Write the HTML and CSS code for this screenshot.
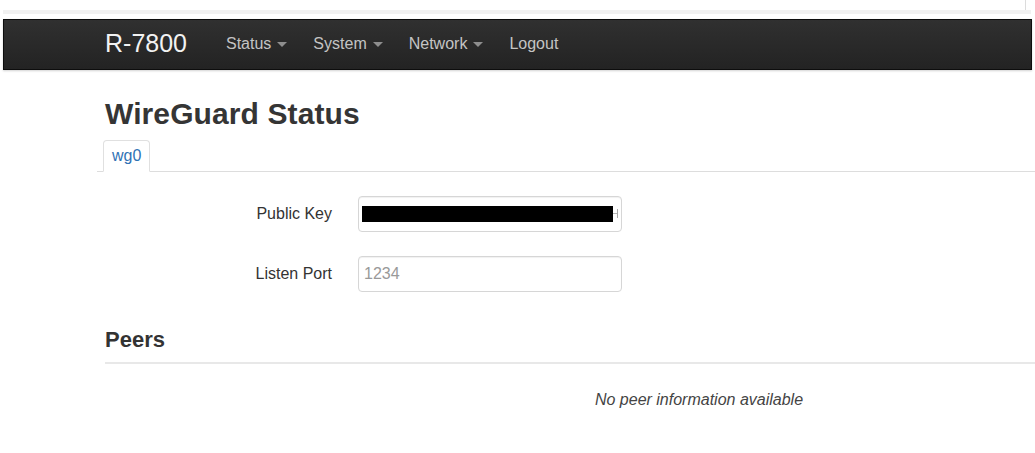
FILE: index.html
```html
<!DOCTYPE html>
<html lang="en">
<head>
<meta charset="utf-8">
<title>WireGuard Status</title>
<link rel="stylesheet" href="styles.css">
</head>
<body>
<div class="top">
  <div class="top-edge"></div>
  <div class="top-band"></div>
</div>
<header class="navbar">
  <div class="nav-inner">
    <a class="brand" href="#">R-7800</a>
    <ul class="menu">
      <li class="menu-item">Status<span class="caret"></span></li>
      <li class="menu-item">System<span class="caret"></span></li>
      <li class="menu-item">Network<span class="caret"></span></li>
      <li class="menu-item">Logout</li>
    </ul>
  </div>
</header>
<main class="content">
  <h2 class="title">WireGuard Status</h2>
  <ul class="tabs">
    <li class="tab active">wg0</li>
  </ul>
  <div class="form">
    <div class="row">
      <label class="label">Public Key</label>
      <div class="field"><span class="redact"></span><span class="tail"></span></div>
    </div>
    <div class="row">
      <label class="label">Listen Port</label>
      <div class="field"><span class="placeholder">1234</span></div>
    </div>
  </div>
  <h3 class="section">Peers</h3>
  <div class="empty">No peer information available</div>
</main>
</body>
</html>
```

FILE: styles.css
```css
html, body {
  margin: 0;
  padding: 0;
  background: #fff;
  font-family: "Liberation Sans", Arial, sans-serif;
  color: #333;
  overflow: hidden;
}

.top {
  height: 19px;
}

.top-edge {
  height: 10px;
  margin-right: 9px;
  border-right: 1px solid #dcdcdc;
}

.top-band {
  height: 4px;
  margin: 0 4px 0 3px;
  background: #f1f1f1;
}

.navbar {
  margin: 0 3px;
  height: 51px;
  box-sizing: border-box;
  background: linear-gradient(#303030, #232323);
  border: 1px solid #0d0d0d;
  box-shadow: 0 1px 2px rgba(0, 0, 0, 0.18);
}

.nav-inner {
  height: 100%;
  display: flex;
  align-items: center;
  padding-left: 101px;
}

.brand {
  font-size: 25px;
  line-height: 30px;
  color: #f2f2f2;
  text-decoration: none;
  margin-right: 26px;
  margin-top: -3px;
}

.menu {
  display: flex;
  list-style: none;
  margin: -2px 0 0;
  padding: 0;
}

.menu-item {
  padding: 0 13px;
  font-size: 16px;
  line-height: 20px;
  color: #c4c4c4;
  display: flex;
  align-items: center;
}

.caret {
  width: 0;
  height: 0;
  margin-left: 6px;
  margin-top: 2px;
  border-top: 5px solid #8e8e8e;
  border-left: 5px solid transparent;
  border-right: 5px solid transparent;
}

.content {
  padding-left: 105px;
}

.title {
  margin: 27px 0 0;
  font-size: 30px;
  line-height: 33px;
  font-weight: bold;
  color: #353535;
  letter-spacing: 0.1px;
}

.tabs {
  list-style: none;
  margin: 10px 0 0 -8px;
  padding: 0 0 0 6px;
  display: flex;
  border-bottom: 1px solid #dddddd;
}

.tab {
  padding: 6px 8px;
  font-size: 16px;
  line-height: 18px;
  color: #2f72b5;
  border: 1px solid #e0e0e0;
  border-bottom-color: transparent;
  border-radius: 4px 4px 0 0;
  margin-bottom: -1px;
  background: #fff;
}

.form {
  margin-top: 24px;
  display: flex;
  flex-direction: column;
  gap: 24px;
}

.row {
  display: flex;
  align-items: center;
  gap: 26px;
}

.label {
  width: 227px;
  text-align: right;
  font-size: 16px;
  color: #333;
}

.field {
  width: 264px;
  height: 36px;
  box-sizing: border-box;
  border: 1px solid #d6d6d6;
  border-radius: 4px;
  box-shadow: inset 0 1px 1px rgba(0, 0, 0, 0.06);
  display: flex;
  align-items: center;
  padding-left: 3px;
  overflow: hidden;
}

.redact {
  width: 251px;
  height: 16px;
  background: #000;
  margin-top: -1px;
}

.tail {
  position: relative;
  width: 4px;
  height: 9px;
  border-right: 1px solid #a8a8a8;
  margin-top: -1px;
}

.tail::before {
  content: "";
  position: absolute;
  left: 0;
  right: 0;
  top: 4px;
  height: 1px;
  background: #b5b5b5;
}

.placeholder {
  padding-left: 2px;
  font-size: 16px;
  color: #999;
}

.section {
  margin: 36px 0 0;
  padding-bottom: 10px;
  font-size: 22px;
  line-height: 24px;
  font-weight: bold;
  color: #333;
  border-bottom: 2px solid #e8e8e8;
}

.empty {
  margin-top: 26px;
  padding-left: 258px;
  text-align: center;
  font-size: 16px;
  line-height: 20px;
  font-style: italic;
  color: #444;
}
```
